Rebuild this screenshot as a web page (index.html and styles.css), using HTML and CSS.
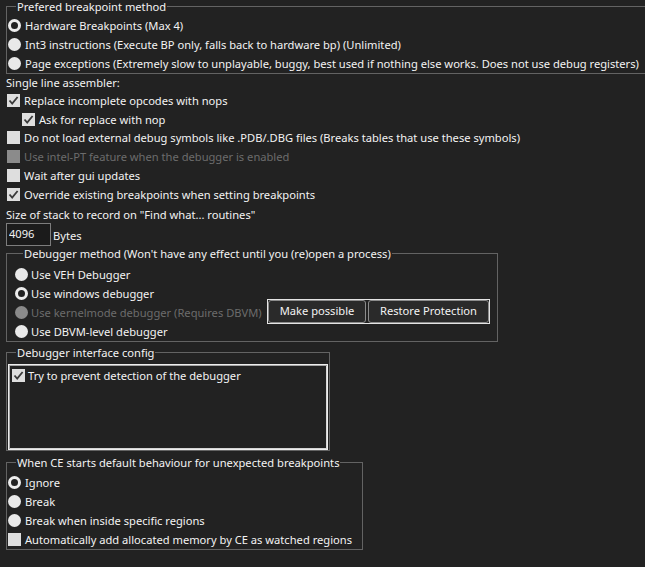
FILE: index.html
```html
<!DOCTYPE html>
<html>
<head>
<meta charset="utf-8">
<link rel="stylesheet" href="styles.css">
</head>
<body>
<div class="page">
  <fieldset class="group g1">
    <legend>Prefered breakpoint method</legend>
    <div class="row"><span class="radio on"></span><span>Hardware Breakpoints (Max 4)</span></div>
    <div class="row"><span class="radio"></span><span>Int3 instructions (Execute BP only, falls back to hardware bp) (Unlimited)</span></div>
    <div class="row"><span class="radio"></span><span>Page exceptions (Extremely slow to unplayable, buggy, best used if nothing else works. Does not use debug registers)</span></div>
  </fieldset>

  <div class="label single">Single line assembler:</div>
  <div class="row crow"><span class="check"><svg viewBox="0 0 13 13"><polyline points="2.5,6.5 5.2,9.6 10.6,3"/></svg></span><span>Replace incomplete opcodes with nops</span></div>
  <div class="row crow sub"><span class="check"><svg viewBox="0 0 13 13"><polyline points="2.5,6.5 5.2,9.6 10.6,3"/></svg></span><span>Ask for replace with nop</span></div>
  <div class="row crow"><span class="check"></span><span>Do not load external debug symbols like .PDB/.DBG files (Breaks tables that use these symbols)</span></div>
  <div class="row crow"><span class="check dis"></span><span class="dis-text">Use intel-PT feature when the debugger is enabled</span></div>
  <div class="row crow"><span class="check"></span><span>Wait after gui updates</span></div>
  <div class="row crow"><span class="check"><svg viewBox="0 0 13 13"><polyline points="2.5,6.5 5.2,9.6 10.6,3"/></svg></span><span>Override existing breakpoints when setting breakpoints</span></div>

  <div class="label stack">Size of stack to record on "Find what... routines"</div>
  <div class="numrow"><input class="num" type="text" value="4096"><span class="unit">Bytes</span></div>

  <fieldset class="group g2">
    <legend>Debugger method (Won't have any effect until you (re)open a process)</legend>
    <div class="row"><span class="radio"></span><span>Use VEH Debugger</span></div>
    <div class="row"><span class="radio on"></span><span>Use windows debugger</span></div>
    <div class="row"><span class="radio dis"></span><span class="dis-text">Use kernelmode debugger (Requires DBVM)</span>
      <div class="btnpanel"><button class="btn b1">Make possible</button><button class="btn b2">Restore Protection</button></div>
    </div>
    <div class="row"><span class="radio"></span><span>Use DBVM-level debugger</span></div>
  </fieldset>

  <fieldset class="group g3">
    <legend>Debugger interface config</legend>
    <div class="listbox">
      <div class="row"><span class="check"><svg viewBox="0 0 13 13"><polyline points="2.5,6.5 5.2,9.6 10.6,3"/></svg></span><span>Try to prevent detection of the debugger</span></div>
    </div>
  </fieldset>

  <fieldset class="group g4">
    <legend>When CE starts default behaviour for unexpected breakpoints</legend>
    <div class="row"><span class="radio on"></span><span>Ignore</span></div>
    <div class="row"><span class="radio"></span><span>Break</span></div>
    <div class="row"><span class="radio"></span><span>Break when inside specific regions</span></div>
    <div class="row"><span class="check"></span><span>Automatically add allocated memory by CE as watched regions</span></div>
  </fieldset>
</div>
</body>
</html>
```

FILE: styles.css
```css
html, body {
  margin: 0;
  padding: 0;
  background: #222222;
}
body {
  width: 645px;
  height: 567px;
  overflow: hidden;
  font-family: "Noto Sans", "Open Sans", sans-serif;
  font-size: 11.15px;
  color: #f3f3f3;
}
.page {
  padding-left: 6px;
  display: flex;
  flex-direction: column;
  align-items: flex-start;
}
.group {
  margin: 0;
  padding: 0;
  min-width: 0;
  box-sizing: border-box;
  border: 1px solid #636363;
}
.group legend {
  margin-left: 8px;
  padding: 0 1px;
  line-height: 13px;
}
.row {
  display: flex;
  align-items: center;
  height: 19px;
  gap: 4px;
  white-space: nowrap;
}
.radio {
  flex: none;
  width: 13px;
  height: 13px;
  border-radius: 50%;
  background: #e9e9e9;
  box-sizing: border-box;
}
.radio.on {
  background: #222222;
  border: 3px solid #ededed;
}
.radio.dis {
  background: #8a8a8a;
}
.check {
  flex: none;
  width: 13px;
  height: 13px;
  background: #dedede;
  display: flex;
}
.check svg {
  width: 13px;
  height: 13px;
}
.check polyline {
  fill: none;
  stroke: #3a3a3a;
  stroke-width: 1.8;
}
.check.dis {
  background: #8b8b8b;
}
.dis-text {
  color: #6c6c6c;
}

/* group 1 */
.g1 {
  width: 700px;
  padding: 3px 0 0 1px;
}

.label {
  white-space: nowrap;
}
.single {
  height: 17px;
  line-height: 17px;
}
.crow {
  height: 18.8px;
  padding-left: 1px;
}
.crow.sub {
  padding-left: 16px;
}
.stack {
  margin-top: 1px;
  height: 18px;
  line-height: 20px;
}
.numrow {
  display: flex;
  align-items: center;
  gap: 2px;
}
.num {
  box-sizing: border-box;
  width: 45px;
  height: 23px;
  margin: 0;
  padding: 0 0 1px 2px;
  border: 1px solid #7d7d7d;
  background: #1b1b1b;
  color: #f3f3f3;
  font: inherit;
  outline: none;
}
.unit {
  padding-top: 3px;
}

/* group 2 */
.g2 {
  width: 492px;
  margin-top: 1px;
  padding: 5px 7px 0 8px;
}
.g2 .row {
  gap: 3px;
}
.btnpanel {
  margin-left: auto;
  margin-bottom: 2px;
  display: flex;
  flex: none;
  gap: 2px;
  border: 1px solid #e4e4e4;
}
.btn {
  box-sizing: border-box;
  height: 23px;
  margin: 0;
  padding: 0 0 1px;
  border: 1px solid #8c8c8c;
  border-radius: 3px;
  background: #2a2a2a;
  color: #f3f3f3;
  font: inherit;
}
.b1 { width: 98px; }
.b2 { width: 121px; }

/* group 3 */
.g3 {
  width: 324px;
  margin-top: 4px;
  padding: 5px 1px 0 1px;
}
.listbox {
  height: 86px;
  box-sizing: border-box;
  border: 1px solid #ededed;
  box-shadow: inset 1px 1px 0 #a5a5a5, inset -1px -1px 0 #d5d5d5;
  padding: 1px 2px 0 3px;
}
.listbox .row {
  gap: 3px;
}

/* group 4 */
.g4 {
  width: 357px;
  margin-top: 5px;
  padding: 4px 0 0 1px;
}
```
